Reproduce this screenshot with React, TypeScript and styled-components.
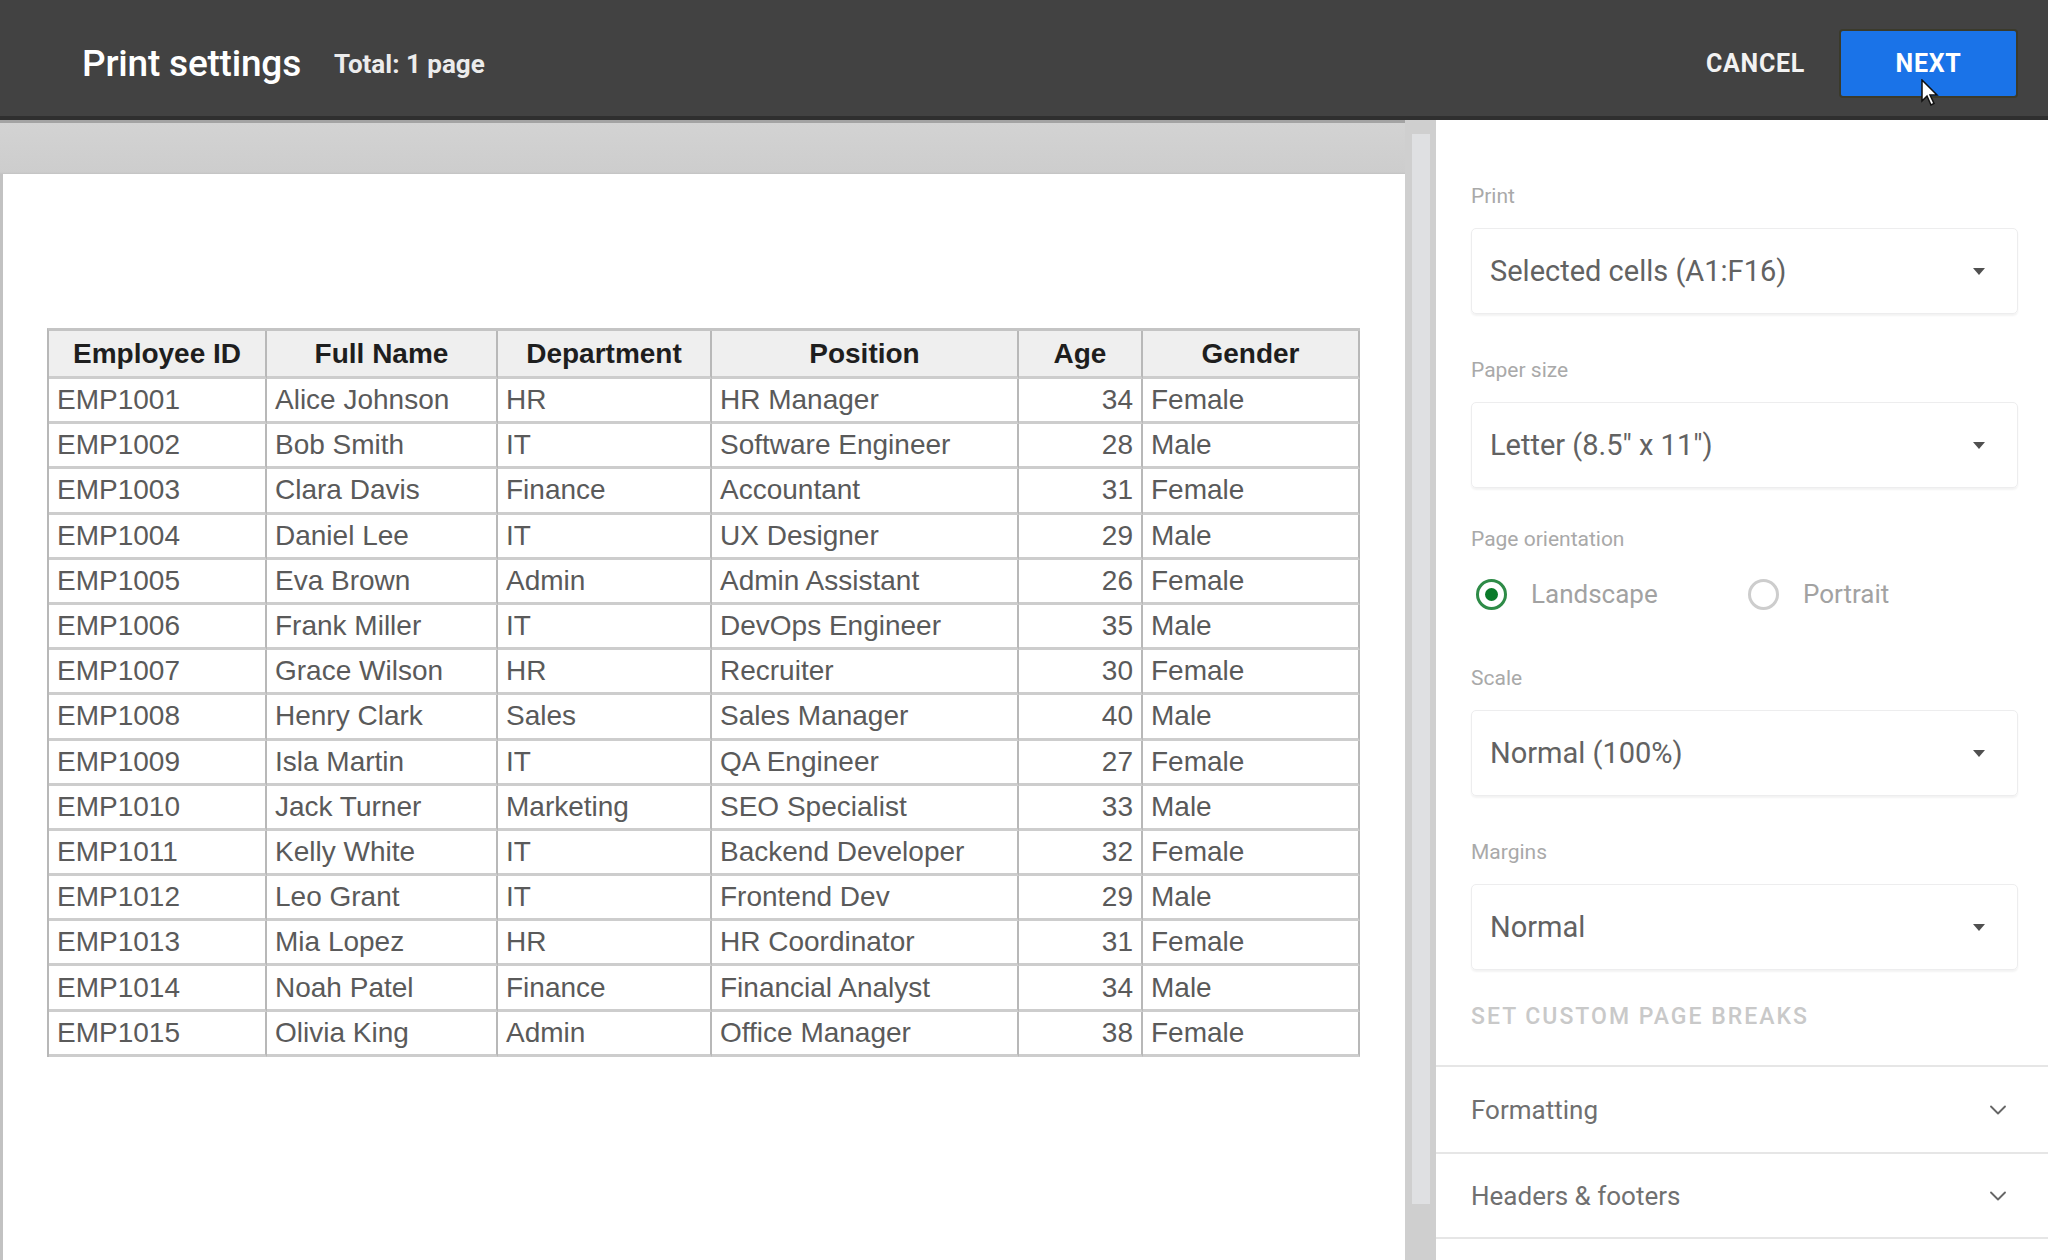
import React, { useState } from 'react';
import styled, { createGlobalStyle } from 'styled-components';
import { ChevronDown } from 'lucide-react';

const GlobalStyle = createGlobalStyle`
  * { box-sizing: border-box; }
  html, body { margin: 0; padding: 0; background: #fff; }
  body { font-family: Roboto, 'Noto Sans', Arial, sans-serif; }
`;

const Root = styled.div`
  width: 2048px;
  height: 1260px;
  display: flex;
  flex-direction: column;
  overflow: hidden;
`;

const TopBar = styled.header`
  height: 120px;
  flex: none;
  display: flex;
  align-items: center;
  padding: 10px 32px 0 82px;
  background: #424242;
  border-bottom: 4px solid #2f2f2f;
`;

const Title = styled.h1`
  margin: 0;
  font-size: 37px;
  font-weight: 500;
  color: #fff;
  letter-spacing: -0.2px;
`;

const PageCount = styled.span`
  margin-left: 33px;
  font-size: 26px;
  font-weight: 700;
  color: #ececec;
  margin-top: 2px;
`;

const Spacer = styled.div`
  flex: 1;
`;

const TextButton = styled.button`
  border: none;
  background: none;
  padding: 0;
  font-family: Roboto, Arial, sans-serif;
  font-size: 25px;
  font-weight: 700;
  letter-spacing: 0.7px;
  color: #f2f2f2;
  cursor: pointer;
`;

const PrimaryButton = styled.button`
  position: relative;
  margin-left: 36px;
  width: 175px;
  height: 65px;
  border: none;
  border-radius: 2px;
  background: #1a73e8;
  color: #fff;
  font-family: Roboto, Arial, sans-serif;
  font-size: 25px;
  font-weight: 700;
  letter-spacing: 0.7px;
  cursor: pointer;
  box-shadow: 0 0 0 2px #3b3a2a;
`;

const Cursor = styled.svg`
  position: absolute;
  left: 80px;
  top: 48px;
`;

const Main = styled.div`
  flex: 1;
  display: flex;
  min-height: 0;
`;

const Preview = styled.div`
  flex: 1;
  display: flex;
  flex-direction: column;
  padding: 54px 0 0 3px;
  background: linear-gradient(#a3a3a3 0, #a3a3a3 3px, #d3d3d3 3px, #cdcdcd 52px, #c2c2c2 54px, #c2c2c2 100%);
`;

const Sheet = styled.div`
  flex: 1;
  background: #fff;
  padding: 154px 0 0 44px;
`;

const Table = styled.table`
  border-collapse: separate;
  border-spacing: 0;
  table-layout: fixed;
  width: 1311px;
  font-family: 'Liberation Sans', Arial, sans-serif;
  font-size: 28px;
  border-top: 3px solid #c4c4c4;
  border-left: 2px solid #b8b8b8;

  th, td {
    border-right: 2px solid #b8b8b8;
    border-bottom: 3px solid #cdcdcd;
    white-space: nowrap;
    overflow: hidden;
  }

  th {
    height: 48px;
    background: #efefef;
    color: #1e1e1e;
    font-weight: 700;
    text-align: center;
  }

  td {
    height: 45.2px;
    padding: 0 8px;
    color: #5a5a5a;
    font-weight: 400;
  }
`;

const NumCell = styled.td`
  text-align: right;
`;

const ScrollTrack = styled.div`
  width: 31px;
  flex: none;
  background: #cfcfcf;
  padding: 14px 6px 0 7px;
`;

const ScrollThumb = styled.div`
  height: 1070px;
  background: #dfe0e2;
`;

const Panel = styled.aside`
  width: 612px;
  flex: none;
  display: flex;
  flex-direction: column;
  background: #fff;
`;

const Fields = styled.div`
  display: flex;
  flex-direction: column;
  gap: 44px;
  padding: 64px 30px 35px 35px;
`;

const Field = styled.div<{ $shift?: number }>`
  display: flex;
  flex-direction: column;
  gap: 20px;
  margin-top: ${(p) => p.$shift ?? 0}px;
`;

const Label = styled.div`
  font-size: 21px;
  line-height: 24px;
  color: #a9a9a9;
`;

const Select = styled.div`
  height: 86px;
  display: flex;
  align-items: center;
  justify-content: space-between;
  padding: 0 32px 0 18px;
  border: 1px solid #ededee;
  border-radius: 5px;
  box-shadow: 0 2px 2px rgba(0, 0, 0, 0.05);
  font-size: 29px;
  color: #626262;
`;

const RadioRow = styled.div`
  height: 46px;
  margin-bottom: 5px;
  display: flex;
  align-items: center;
`;

const RadioOption = styled.label<{ $width?: number }>`
  display: flex;
  align-items: center;
  gap: 24px;
  width: ${(p) => (p.$width ? `${p.$width}px` : 'auto')};
  padding-left: 5px;
  font-size: 26px;
  color: #a2a2a2;
`;

const RadioCircle = styled.span<{ $checked: boolean }>`
  width: 31px;
  height: 31px;
  border-radius: 50%;
  border: 3px solid ${(p) => (p.$checked ? '#2e8b47' : '#cdcdcd')};
  display: flex;
  align-items: center;
  justify-content: center;
  &::after {
    content: '';
    display: ${(p) => (p.$checked ? 'block' : 'none')};
    width: 13px;
    height: 13px;
    border-radius: 50%;
    background: #0b7a2a;
  }
`;

const LinkText = styled.div`
  font-size: 23px;
  font-weight: 500;
  letter-spacing: 2px;
  color: #c9c9c9;
  margin-top: -11px;
`;

const Accordion = styled.div`
  display: flex;
  align-items: center;
  justify-content: space-between;
  height: 87px;
  padding: 0 36px 0 35px;
  border-top: 2px solid #e6e6e6;
  font-size: 26px;
  color: #707070;
  &:last-child {
    border-bottom: 2px solid #e6e6e6;
  }
`;

const employees = [
  ['EMP1001', 'Alice Johnson', 'HR', 'HR Manager', 34, 'Female'],
  ['EMP1002', 'Bob Smith', 'IT', 'Software Engineer', 28, 'Male'],
  ['EMP1003', 'Clara Davis', 'Finance', 'Accountant', 31, 'Female'],
  ['EMP1004', 'Daniel Lee', 'IT', 'UX Designer', 29, 'Male'],
  ['EMP1005', 'Eva Brown', 'Admin', 'Admin Assistant', 26, 'Female'],
  ['EMP1006', 'Frank Miller', 'IT', 'DevOps Engineer', 35, 'Male'],
  ['EMP1007', 'Grace Wilson', 'HR', 'Recruiter', 30, 'Female'],
  ['EMP1008', 'Henry Clark', 'Sales', 'Sales Manager', 40, 'Male'],
  ['EMP1009', 'Isla Martin', 'IT', 'QA Engineer', 27, 'Female'],
  ['EMP1010', 'Jack Turner', 'Marketing', 'SEO Specialist', 33, 'Male'],
  ['EMP1011', 'Kelly White', 'IT', 'Backend Developer', 32, 'Female'],
  ['EMP1012', 'Leo Grant', 'IT', 'Frontend Dev', 29, 'Male'],
  ['EMP1013', 'Mia Lopez', 'HR', 'HR Coordinator', 31, 'Female'],
  ['EMP1014', 'Noah Patel', 'Finance', 'Financial Analyst', 34, 'Male'],
  ['EMP1015', 'Olivia King', 'Admin', 'Office Manager', 38, 'Female'],
];

const columns = [
  { title: 'Employee ID', width: 218 },
  { title: 'Full Name', width: 231 },
  { title: 'Department', width: 214 },
  { title: 'Position', width: 307 },
  { title: 'Age', width: 124 },
  { title: 'Gender', width: 217 },
];

const Caret = () => (
  <svg width="12" height="7" viewBox="0 0 12 7">
    <path d="M0 0 L12 0 L6 7 Z" fill="#505050" />
  </svg>
);

const Dropdown = ({ label, value }: { label: string; value: string }) => (
  <Field>
    <Label>{label}</Label>
    <Select>
      <span>{value}</span>
      <Caret />
    </Select>
  </Field>
);

const App = () => {
  const [orientation, setOrientation] = useState<'landscape' | 'portrait'>('landscape');

  return (
    <Root>
      <GlobalStyle />
      <TopBar>
        <Title>Print settings</Title>
        <PageCount>Total: 1 page</PageCount>
        <Spacer />
        <TextButton>CANCEL</TextButton>
        <PrimaryButton>
          NEXT
          <Cursor width="18" height="28" viewBox="0 0 18 28">
            <path d="M1 1 L1 22 L6 17 L10 26 L13 24.5 L9 16 L16 16 Z" fill="#fff" stroke="#111" strokeWidth="1.5" />
          </Cursor>
        </PrimaryButton>
      </TopBar>
      <Main>
        <Preview>
          <Sheet>
            <Table>
              <colgroup>
                {columns.map((c) => (
                  <col key={c.title} style={{ width: c.width }} />
                ))}
              </colgroup>
              <thead>
                <tr>
                  {columns.map((c) => (
                    <th key={c.title}>{c.title}</th>
                  ))}
                </tr>
              </thead>
              <tbody>
                {employees.map(([id, name, dept, pos, age, gender]) => (
                  <tr key={id as string}>
                    <td>{id}</td>
                    <td>{name}</td>
                    <td>{dept}</td>
                    <td>{pos}</td>
                    <NumCell>{age}</NumCell>
                    <td>{gender}</td>
                  </tr>
                ))}
              </tbody>
            </Table>
          </Sheet>
        </Preview>
        <ScrollTrack>
          <ScrollThumb />
        </ScrollTrack>
        <Panel>
          <Fields>
            <Dropdown label="Print" value="Selected cells (A1:F16)" />
            <Dropdown label="Paper size" value={'Letter (8.5" x 11")'} />
            <Field $shift={-5}>
              <Label>Page orientation</Label>
              <RadioRow>
                <RadioOption $width={272} onClick={() => setOrientation('landscape')}>
                  <RadioCircle $checked={orientation === 'landscape'} />
                  Landscape
                </RadioOption>
                <RadioOption onClick={() => setOrientation('portrait')}>
                  <RadioCircle $checked={orientation === 'portrait'} />
                  Portrait
                </RadioOption>
              </RadioRow>
            </Field>
            <Dropdown label="Scale" value="Normal (100%)" />
            <Dropdown label="Margins" value="Normal" />
            <LinkText>SET CUSTOM PAGE BREAKS</LinkText>
          </Fields>
          <div>
            <Accordion>
              Formatting
              <ChevronDown size={28} strokeWidth={1.6} color="#666" />
            </Accordion>
            <Accordion>
              Headers &amp; footers
              <ChevronDown size={28} strokeWidth={1.6} color="#666" />
            </Accordion>
          </div>
        </Panel>
      </Main>
    </Root>
  );
};

export default App;
